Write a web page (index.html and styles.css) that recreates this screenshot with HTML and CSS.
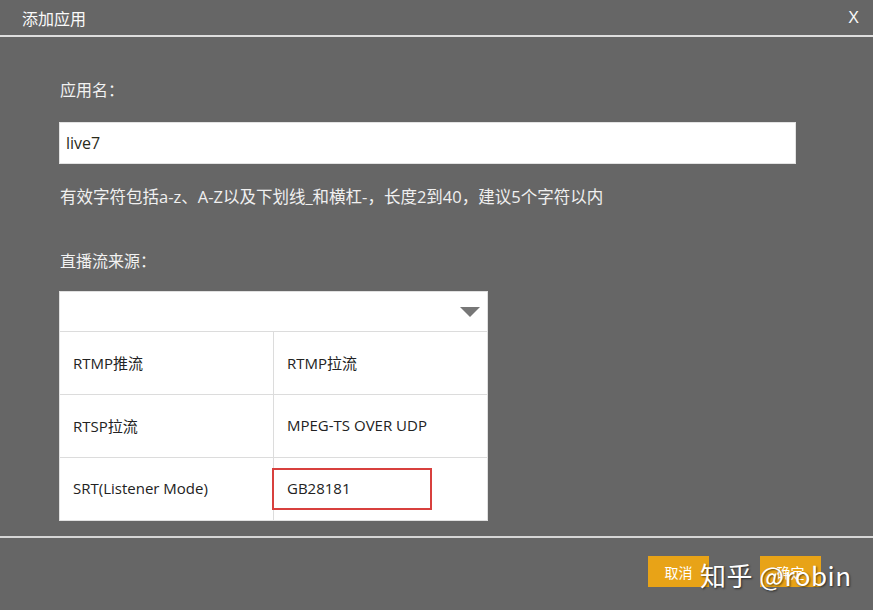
FILE: index.html
```html
<!DOCTYPE html>
<html lang="zh-CN">
<head>
  <meta charset="UTF-8">
  <title>添加应用</title>
  <link rel="stylesheet" href="styles.css">
</head>
<body>
  <div class="dialog">
    <div class="header">
      <span class="title">添加应用</span>
      <span class="close">X</span>
    </div>
    <div class="content">
      <p class="label first">应用名：</p>
      <div class="input">live7</div>
      <p class="hint">有效字符包括a-z、A-Z以及下划线_和横杠-，长度2到40，建议5个字符以内</p>
      <p class="label">直播流来源：</p>
      <div class="select">
        <div class="select-head">
          <span class="arrow"></span>
        </div>
        <div class="options">
          <div class="option">RTMP推流</div>
          <div class="option">RTMP拉流</div>
          <div class="option">RTSP拉流</div>
          <div class="option">MPEG-TS OVER UDP</div>
          <div class="option">SRT(Listener Mode)</div>
          <div class="option marked">GB28181<span class="mark"></span></div>
        </div>
      </div>
    </div>
    <div class="footer">
      <button class="btn">取消</button>
      <button class="btn">确定</button>
    </div>
    <div class="watermark">知乎 @robin</div>
  </div>
</body>
</html>
```

FILE: styles.css
```css
html, body {
  margin: 0;
  padding: 0;
}
body {
  background: #666666;
  font-family: "Open Sans", "Noto Sans CJK SC", sans-serif;
  color: #f2f2f2;
  width: 873px;
  height: 610px;
  overflow: hidden;
}
.dialog {
  position: relative;
  height: 610px;
}
.header {
  height: 35px;
  border-bottom: 2px solid #dedede;
  display: flex;
  align-items: center;
  justify-content: space-between;
  padding: 0 14px 0 22px;
}
.title {
  font-size: 16px;
  color: #fafafa;
}
.close {
  font-family: "Liberation Sans", Arial, sans-serif;
  font-size: 16px;
  color: #fafafa;
}
.content {
  padding: 0 77px 0 59px;
}
.label {
  margin: 44px 0 0 1px;
  font-size: 16px;
  line-height: 20px;
}
.label.first {
  margin-top: 43px;
}
.input {
  margin-top: 22px;
  height: 42px;
  background: #fff;
  border: 1px solid #e3e3e3;
  box-sizing: border-box;
  display: flex;
  align-items: center;
  padding-left: 6px;
  font-size: 16px;
  color: #2a2a1a;
}
.hint {
  margin: 23px 0 0 1px;
  font-size: 16.5px;
  line-height: 20px;
  color: #f0f0f0;
}
.label + .select {
  margin-top: 20px;
}
.select {
  width: 429px;
  background: #fff;
  border: 1px solid #e0e0e0;
  box-sizing: border-box;
  color: #222;
}
.select-head {
  height: 39px;
  border-bottom: 1px solid #dcdcdc;
  display: flex;
  align-items: center;
  justify-content: flex-end;
  padding-right: 7px;
}
.arrow {
  width: 0;
  height: 0;
  border-left: 10px solid transparent;
  border-right: 10px solid transparent;
  border-top: 10px solid #777;
}
.options {
  display: grid;
  grid-template-columns: 214px 1fr;
}
.option {
  position: relative;
  height: 63px;
  display: flex;
  align-items: center;
  padding: 0 0 2px 13px;
  font-size: 15px;
  border-top: 1px solid #dcdcdc;
  box-sizing: border-box;
}
.option:nth-child(-n+2) {
  border-top: none;
  height: 62px;
}
.option:nth-child(odd) {
  border-right: 1px solid #dcdcdc;
}
.mark {
  position: absolute;
  left: -2px;
  top: 10px;
  width: 160px;
  height: 42px;
  border: 2px solid #d8403e;
  box-sizing: border-box;
}
.footer {
  position: absolute;
  left: 0;
  right: 0;
  top: 536px;
  border-top: 2px solid #d6d6d6;
  display: flex;
  justify-content: flex-end;
  gap: 51px;
  padding: 18px 52px 0 0;
}
.btn {
  width: 61px;
  height: 31px;
  border: none;
  background: #e8a317;
  color: #fff;
  font-family: "Noto Sans CJK SC", sans-serif;
  font-size: 14px;
  padding: 0;
}
.watermark {
  position: absolute;
  left: 700px;
  top: 556px;
  font-family: "Noto Sans CJK SC", "Noto Sans", sans-serif;
  font-size: 26px;
  color: #fff;
  text-shadow: 1px 1px 2px rgba(0, 0, 0, 0.6);
  letter-spacing: 0.5px;
}
```
